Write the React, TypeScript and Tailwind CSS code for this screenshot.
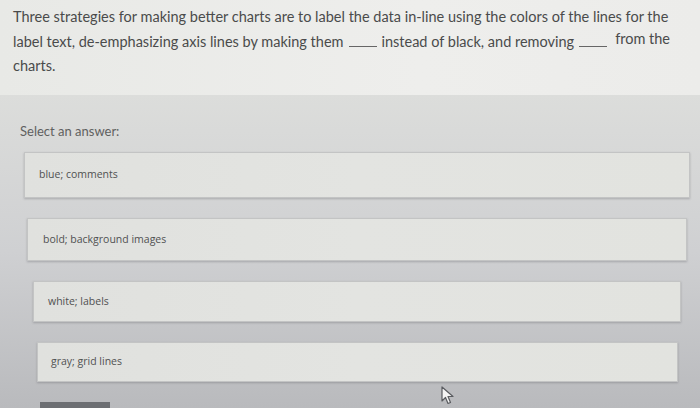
const options = [
  { label: "blue; comments", cls: "ml-[24px] mr-[10px] h-[46px] pl-[14px]" },
  { label: "bold; background images", cls: "ml-[27px] mr-[13px] h-[43px] pl-[15px]" },
  { label: "white; labels", cls: "ml-[33px] mr-[19px] h-[41px] pl-[14px]" },
  { label: "gray; grid lines", cls: "ml-[37px] mr-[22px] h-[40px] pl-[13px]" },
];

function Blank() {
  return <span className="mx-[5px] inline-block h-[2px] w-[28px] border-b border-[#666]" />;
}

function Cursor() {
  return (
    <svg width="14" height="20" viewBox="0 0 14 20" className="absolute left-[441px] top-[386px]">
      <path d="M1 1 L1 15 L4.5 11.5 L7 17.5 L9.5 16.5 L7 10.5 L12 10.5 Z" fill="#f4f4f4" stroke="#5a5c60" strokeWidth="1.2" strokeLinejoin="round" />
    </svg>
  );
}

export default function App() {
  return (
    <div className="relative h-[408px] w-[700px] overflow-hidden font-['Lato',sans-serif]">
      <div className="h-[95px] bg-[linear-gradient(90deg,#e8e9e6,#eeeeec_60%,#ececea)] px-[13px] pt-[5px]">
        <p className="m-0 whitespace-nowrap text-[14.5px] leading-[24.5px] text-[#4a4b4b]">
          Three strategies for making better charts are to label the data in-line using the colors of the lines for the
          <br />
          label text, de-emphasizing axis lines by making them
          <Blank />
          instead of black, and removing
          <Blank />
          <span className="ml-[3px] inline-block -translate-y-[3px]">from the</span>
          <br />
          charts.
        </p>
      </div>
      <div className="h-[313px] bg-[linear-gradient(180deg,#dcdddb,#cfd0d2_50%,#b9babd)]">
        <div className="px-[20px] pt-[27px] text-[13px] leading-[18px] text-[#5f6060]">Select an answer:</div>
        <div className="mt-[12px] flex flex-col gap-[20px]">
          {options.map((o) => (
            <div
              key={o.label}
              className={`flex items-center border border-[#c3c4c4] bg-[linear-gradient(90deg,#e0e1de,#e3e4e1_50%,#e2e3df)] font-['Open_Sans',sans-serif] text-[10.5px] text-[#505152] shadow-[0_1px_2px_rgba(90,90,95,0.35)] ${o.cls}`}
            >
              {o.label}
            </div>
          ))}
        </div>
        <div className="ml-[40px] mt-[20px] h-[6px] w-[70px] bg-[#6d6f73]" />
      </div>
      <Cursor />
    </div>
  );
}
